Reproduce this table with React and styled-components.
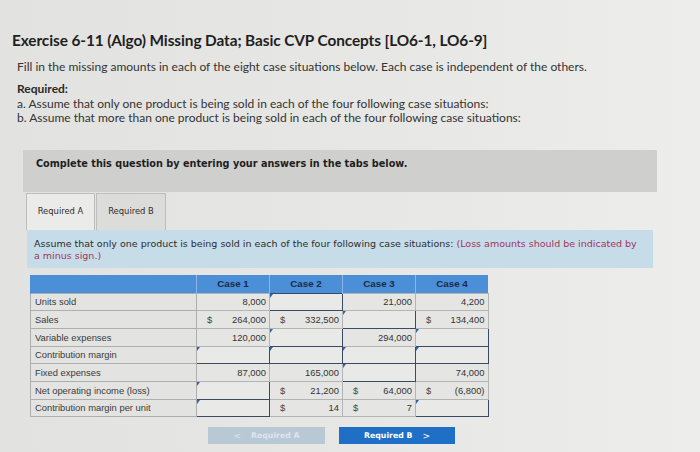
import React from 'react';
import styled, { createGlobalStyle } from 'styled-components';

const Global = createGlobalStyle`
  html, body { margin: 0; padding: 0; }
  body { background: #e6e6e4; width: 700px; height: 452px; overflow: hidden; }
`;

const Page = styled.div`
  width: 700px;
  height: 452px;
  box-sizing: border-box;
  padding-top: 31px;
  background: linear-gradient(90deg, #e2e2e0 0%, #e7e7e5 55%, #ededeb 100%);
  font-family: Lato, "Open Sans", sans-serif;
  color: #2a2a2a;
`;

const Title = styled.h1`
  margin: 0 0 0 12px;
  font-size: 15.4px;
  font-weight: 700;
  line-height: 18px;
  color: #1f1f1f;
  letter-spacing: -0.1px;
`;

const Intro = styled.p`
  margin: 11px 0 0 17px;
  font-size: 12px;
  line-height: 14px;
  color: #333;
`;

const Required = styled.div`
  margin: 8px 0 0 17px;
  font-size: 12px;
  line-height: 14.5px;
  color: #333;
`;

const ReqHead = styled.div`
  font-weight: 700;
  color: #2a2a2a;
`;

const Panel = styled.div`
  margin: 24px 0 0 23px;
  width: 634px;
`;

const Banner = styled.div`
  height: 42px;
  box-sizing: border-box;
  padding: 7px 0 0 13px;
  background: #cfcfcd;
  font-family: "DejaVu Sans", Verdana, sans-serif;
  font-size: 9.7px;
  font-weight: 700;
  line-height: 13px;
  color: #1e1e1e;
`;

const Tabs = styled.div`
  display: flex;
  gap: 1px;
  margin: 1px 0 0 3px;
`;

const Tab = styled.div`
  width: ${p => p.$w}px;
  height: 37px;
  box-sizing: border-box;
  display: flex;
  align-items: center;
  justify-content: center;
  padding-bottom: 2px;
  border: 1px solid #bdbdbb;
  border-bottom: none;
  background: ${p => (p.$active ? '#ebebe9' : '#dcdcda')};
  font-family: "DejaVu Sans", Verdana, sans-serif;
  font-size: 8.4px;
  color: #2e2e2e;
`;

const Content = styled.div`
  margin-left: 4px;
  width: 626px;
`;

const Instruction = styled.div`
  height: 38px;
  box-sizing: border-box;
  padding: 8px 8px 0 7px;
  background: #c6dce8;
  font-family: "DejaVu Sans", Verdana, sans-serif;
  font-size: 9.5px;
  line-height: 12.5px;
  color: #2c2c2c;
`;

const Warn = styled.span`
  color: #a3345c;
`;

const Table = styled.table`
  margin: 7px 0 0 3px;
  border-collapse: collapse;
  table-layout: fixed;
  font-family: "Liberation Sans", Arial, sans-serif;
  font-size: 9.4px;
  color: #333;
`;

const HeadCell = styled.th`
  height: 18px;
  padding: 0;
  background: #4b8fd9;
  border-left: 1px solid ${p => (p.$first ? '#4b8fd9' : '#8db6e4')};
  font-weight: 700;
  font-size: 9.8px;
  color: #1b2a45;
  text-align: center;
  width: ${p => p.$w}px;
`;

const LabelCell = styled.td`
  height: 17.7px;
  padding: 0 0 0 4px;
  box-sizing: border-box;
  border: 1px solid #aeaeac;
  background: #e3e3e1;
  white-space: nowrap;
  color: #3a3a3a;
`;

const ValueCell = styled.td`
  height: 17.7px;
  padding: 0;
  box-sizing: border-box;
  border: ${p => (p.$input ? '1.6px solid #3a4a62' : '1px solid #b4b4b2')};
  background: ${p => (p.$input ? '#e9e9e8' : '#e5e5e3')};
  position: relative;
`;

const Flag = styled.span`
  position: absolute;
  left: 0;
  top: 0;
  width: 0;
  height: 0;
  border-top: 4px solid #2f62a8;
  border-right: 3px solid transparent;
`;

const Inner = styled.div`
  display: flex;
  justify-content: space-between;
  align-items: center;
  padding: 0 3px 0 10px;
  line-height: 15px;
`;

const Dollar = styled.span`
  color: #444;
`;

const Buttons = styled.div`
  display: flex;
  gap: 14px;
  margin: 10px 0 0 181px;
`;

const NavButton = styled.div`
  width: ${p => p.$w}px;
  height: 17px;
  display: flex;
  align-items: center;
  justify-content: center;
  gap: 10px;
  background: ${p => (p.$disabled ? '#b9c8d5' : '#1f6fc6')};
  color: ${p => (p.$disabled ? '#dde5ee' : '#ffffff')};
  font-family: "DejaVu Sans", Verdana, sans-serif;
  font-size: 7.8px;
  font-weight: 700;
`;

const Chevron = styled.span`
  font-size: 9px;
  font-weight: 400;
`;

// cell: null = input; {v, d} = given value with optional dollar sign
const rows = [
  ['Units sold', [{ v: '8,000' }, null, { v: '21,000' }, { v: '4,200' }]],
  ['Sales', [{ v: '264,000', d: true }, { v: '332,500', d: true }, null, { v: '134,400', d: true }]],
  ['Variable expenses', [{ v: '120,000' }, null, { v: '294,000' }, null]],
  ['Contribution margin', [null, null, null, null]],
  ['Fixed expenses', [{ v: '87,000' }, { v: '165,000' }, null, { v: '74,000' }]],
  ['Net operating income (loss)', [null, { v: '21,200', d: true }, { v: '64,000', d: true }, { v: '(6,800)', d: true }]],
  ['Contribution margin per unit', [null, { v: '14', d: true }, { v: '7', d: true }, null]],
];

export default function App() {
  return (
    <>
      <Global />
      <Page>
        <Title>Exercise 6-11 (Algo) Missing Data; Basic CVP Concepts [LO6-1, LO6-9]</Title>
        <Intro>
          Fill in the missing amounts in each of the eight case situations below. Each case is independent of the others.
        </Intro>
        <Required>
          <ReqHead>Required:</ReqHead>
          <div>a. Assume that only one product is being sold in each of the four following case situations:</div>
          <div>b. Assume that more than one product is being sold in each of the four following case situations:</div>
        </Required>
        <Panel>
          <Banner>Complete this question by entering your answers in the tabs below.</Banner>
          <Tabs>
            <Tab $active $w={69}>Required A</Tab>
            <Tab $w={70}>Required B</Tab>
          </Tabs>
          <Content>
            <Instruction>
              Assume that only one product is being sold in each of the four following case situations:{' '}
              <Warn>(Loss amounts should be indicated by</Warn>
              <br />
              <Warn>a minus sign.)</Warn>
            </Instruction>
            <Table>
              <thead>
                <tr>
                  <HeadCell $first $w={165}></HeadCell>
                  <HeadCell $w={72}>Case 1</HeadCell>
                  <HeadCell $w={72}>Case 2</HeadCell>
                  <HeadCell $w={72}>Case 3</HeadCell>
                  <HeadCell $w={72}>Case 4</HeadCell>
                </tr>
              </thead>
              <tbody>
                {rows.map(([label, cells]) => (
                  <tr key={label}>
                    <LabelCell>{label}</LabelCell>
                    {cells.map((c, i) =>
                      c === null ? (
                        <ValueCell key={i} $input>
                          <Flag />
                        </ValueCell>
                      ) : (
                        <ValueCell key={i}>
                          <Inner>
                            <Dollar>{c.d ? '$' : ''}</Dollar>
                            <span>{c.v}</span>
                          </Inner>
                        </ValueCell>
                      )
                    )}
                  </tr>
                ))}
              </tbody>
            </Table>
            <Buttons>
              <NavButton $disabled $w={117}>
                <Chevron>&lt;</Chevron>
                <span>Required A</span>
              </NavButton>
              <NavButton $w={116}>
                <span>Required B</span>
                <Chevron>&gt;</Chevron>
              </NavButton>
            </Buttons>
          </Content>
        </Panel>
      </Page>
    </>
  );
}
